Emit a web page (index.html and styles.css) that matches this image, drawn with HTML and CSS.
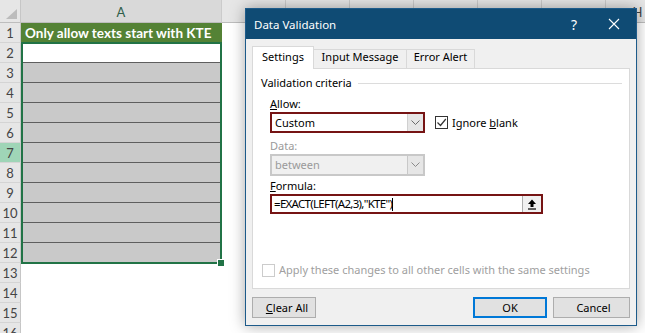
FILE: index.html
```html
<!DOCTYPE html>
<html lang="en">

<head>
  <meta charset="UTF-8">
  <title>Data Validation</title>
  <link rel="stylesheet" href="styles.css">
</head>

<body>
  <div class="sheet">
    <div class="row head-row">
      <div class="corner"><span class="corner-tri"></span></div>
      <div class="col-head col-a">A</div>
      <div class="col-head"></div>
      <div class="col-head"></div>
      <div class="col-head"></div>
      <div class="col-head"></div>
      <div class="col-head"></div>
      <div class="col-head"></div>
      <div class="col-head">H</div>
    </div>
    <div class="row">
      <div class="row-head">1</div>
      <div class="cell title-cell">Only allow texts start with KTE</div>
    </div>
    <div class="row"><div class="row-head">2</div><div class="cell marked"></div></div>
    <div class="row"><div class="row-head">3</div><div class="cell marked shaded"></div></div>
    <div class="row"><div class="row-head">4</div><div class="cell marked shaded"></div></div>
    <div class="row"><div class="row-head">5</div><div class="cell marked shaded"></div></div>
    <div class="row"><div class="row-head">6</div><div class="cell marked shaded"></div></div>
    <div class="row"><div class="row-head hover">7</div><div class="cell marked shaded"></div></div>
    <div class="row"><div class="row-head">8</div><div class="cell marked shaded"></div></div>
    <div class="row"><div class="row-head">9</div><div class="cell marked shaded"></div></div>
    <div class="row"><div class="row-head">10</div><div class="cell marked shaded"></div></div>
    <div class="row"><div class="row-head">11</div><div class="cell marked shaded"></div></div>
    <div class="row"><div class="row-head">12</div><div class="cell marked shaded"></div></div>
    <div class="row"><div class="row-head">13</div><div class="cell"></div></div>
    <div class="row"><div class="row-head">14</div><div class="cell"></div></div>
    <div class="row"><div class="row-head">15</div><div class="cell"></div></div>
    <div class="row"><div class="row-head">16</div><div class="cell"></div></div>

    <div class="selection"><span class="fill-handle"></span></div>
  </div>

  <div class="dialog">
    <div class="titlebar">
      <span class="title">Data Validation</span>
      <span class="help">?</span>
      <svg class="close" width="12" height="12" viewBox="0 0 12 12">
        <path d="M1 1 L11 11 M11 1 L1 11" stroke="#fff" stroke-width="1.1" fill="none" />
      </svg>
    </div>

    <div class="dialog-body">
      <div class="tabs">
        <div class="tab active">Settings</div>
        <div class="tab tab-input">Input Message</div>
        <div class="tab tab-error">Error Alert</div>
      </div>

      <div class="panel">
        <div class="group-head">
          <span>Validation criteria</span>
          <span class="rule"></span>
        </div>

        <div class="fields">
          <div class="field-label"><u>A</u>llow:</div>
          <div class="field-line">
            <div class="combo highlight">
              <span class="combo-text">Custom</span>
              <span class="combo-btn">
                <svg width="9" height="6" viewBox="0 0 9 6"><path d="M0.5 0.5 L4.5 4.5 L8.5 0.5" stroke="#6a6a6a" fill="none" /></svg>
              </span>
            </div>
            <div class="check">
              <span class="box">
                <svg width="11" height="11" viewBox="0 0 11 11"><path d="M1.5 5.5 L4.5 8.5 L9.8 2" stroke="#333" stroke-width="1.2" fill="none" /></svg>
              </span>
              <span>Ignore <u>b</u>lank</span>
            </div>
          </div>

          <div class="field-label disabled">Data:</div>
          <div class="combo disabled">
            <span class="combo-text">between</span>
            <span class="combo-btn">
              <svg width="9" height="6" viewBox="0 0 9 6"><path d="M0.5 0.5 L4.5 4.5 L8.5 0.5" stroke="#8a8a8a" fill="none" /></svg>
            </span>
          </div>

          <div class="field-label formula-label"><u>F</u>ormula:</div>
          <div class="formula highlight">
            <span class="formula-text">=EXACT(LEFT(A2,3),"KTE")</span>
            <span class="caret"></span>
            <span class="ref-btn">
              <svg width="10" height="11" viewBox="0 0 10 11">
                <path d="M5 0.5 L9 5 H6.5 V8 H3.5 V5 H1 Z" fill="#000" />
                <path d="M1 10 H9" stroke="#000" stroke-width="1.2" />
              </svg>
            </span>
          </div>
        </div>

        <div class="apply">
          <span class="box off"></span>
          <span>Apply these changes to all other cells with the same settings</span>
        </div>
      </div>

      <div class="buttons">
        <div class="btn btn-clear"><u>C</u>lear All</div>
        <div class="btn btn-ok">OK</div>
        <div class="btn btn-cancel">Cancel</div>
      </div>
    </div>
  </div>
</body>

</html>
```

FILE: styles.css
```css
body {
  margin: 0;
  width: 645px;
  height: 333px;
  overflow: hidden;
  position: relative;
  background-color: #ffffff;
  font-family: "Noto Sans", "Open Sans", sans-serif;
  font-size: 11px;
  color: #000000;
}

/* worksheet */

.sheet {
  position: relative;
  width: 670px;
  font-family: Lato, "Noto Sans", sans-serif;
}

.row {
  display: flex;
  height: 20px;
}

.head-row {
  height: 23px;
}

.corner {
  width: 21px;
  box-sizing: border-box;
  background-color: #e6e6e6;
  border-right: 1px solid #c6c6c6;
  border-bottom: 1px solid #bdbdbd;
  display: flex;
  align-items: flex-end;
  justify-content: flex-end;
  padding: 0 3px 3px 0;
}

.corner-tri {
  width: 0;
  height: 0;
  border-left: 11px solid transparent;
  border-bottom: 10px solid #bcbcbc;
}

.col-head {
  width: 64px;
  flex-shrink: 0;
  box-sizing: border-box;
  background-color: #e6e6e6;
  border-right: 1px solid #cbcbcb;
  border-bottom: 1px solid #bdbdbd;
  text-align: center;
  line-height: 24px;
  font-size: 13px;
  color: #444;
}

.col-head.col-a {
  width: 201px;
  background-color: #d9d9d9;
  color: #2f5f4a;
}

.row-head {
  width: 21px;
  flex-shrink: 0;
  box-sizing: border-box;
  background-color: #e6e6e6;
  border-right: 1px solid #c6c6c6;
  border-bottom: 1px solid #d4d4d4;
  text-align: center;
  line-height: 20px;
  font-size: 13px;
  color: #444;
}

.row-head.hover {
  background-color: #9fd5b7;
}

.cell {
  width: 201px;
  flex-shrink: 0;
  box-sizing: border-box;
  background-color: #fff;
}

.title-cell {
  background-color: #548235;
  color: #fff;
  font-weight: bold;
  font-size: 13.5px;
  line-height: 20px;
  padding-left: 4px;
  white-space: nowrap;
}

.cell.marked {
  border-bottom: 1px solid #5e5e5e;
}

.cell.shaded {
  background-color: #c9c9c9;
}

.selection {
  position: absolute;
  left: 21px;
  top: 42px;
  width: 201px;
  height: 222px;
  box-sizing: border-box;
  border: 2px solid #217346;
}

.fill-handle {
  position: absolute;
  right: -5px;
  bottom: -5px;
  width: 6px;
  height: 6px;
  background-color: #217346;
  border: 1px solid #fff;
}

/* dialog */

.dialog {
  position: absolute;
  left: 245px;
  top: 8px;
  width: 392px;
  height: 318px;
  box-sizing: border-box;
  border: 1px solid #1d5b8a;
  background-color: #f0f0f0;
  box-shadow: 0 0 14px rgba(0, 0, 0, 0.35);
  display: flex;
  flex-direction: column;
}

.titlebar {
  height: 30px;
  flex-shrink: 0;
  background-color: #0f4b74;
  color: #fff;
  display: flex;
  align-items: center;
  padding-left: 8px;
}

.title {
  flex: 1;
  font-size: 11.5px;
}

.help {
  font-size: 14px;
  margin-right: 31px;
}

.close {
  margin-right: 16px;
}

.dialog-body {
  flex: 1;
  padding: 7px 6px 7px 6px;
  display: flex;
  flex-direction: column;
}

.tabs {
  display: flex;
  align-items: flex-end;
  height: 22px;
}

.tab {
  box-sizing: border-box;
  height: 19px;
  border: 1px solid #d9d9d9;
  border-left: none;
  border-bottom: none;
  display: flex;
  align-items: flex-end;
  justify-content: center;
  padding-bottom: 3px;
  line-height: 16px;
}

.tab.active {
  position: relative;
  z-index: 1;
  width: 62px;
  height: 23px;
  margin-bottom: -1px;
  padding-bottom: 4px;
  background-color: #fff;
  border-left: 1px solid #d9d9d9;
}

.tab-input {
  width: 93px;
}

.tab-error {
  width: 68px;
}

.panel {
  height: 221px;
  box-sizing: border-box;
  background-color: #fff;
  border: 1px solid #d9d9d9;
  display: flex;
  flex-direction: column;
  padding: 6px 7px 0 8px;
}

.group-head {
  display: flex;
  align-items: center;
  gap: 6px;
  line-height: 16px;
}

.rule {
  flex: 1;
  height: 1px;
  background-color: #dcdcdc;
}

.fields {
  padding-left: 9px;
}

.field-label {
  line-height: 16px;
  margin-top: 5px;
}

.field-label.disabled {
  color: #9a9a9a;
}

.formula-label {
  margin-top: 2px;
}

.field-line {
  display: flex;
  align-items: center;
}

.combo {
  width: 155px;
  height: 21px;
  box-sizing: border-box;
  display: flex;
  align-items: stretch;
  background-color: #fff;
}

.combo.highlight,
.formula.highlight {
  border: 2px solid #761414;
}

.combo.disabled {
  height: 22px;
  border: 2px solid #c8c8c8;
  background-color: #f0f0f0;
  color: #9a9a9a;
}

.combo-text {
  flex: 1;
  padding-left: 3px;
  line-height: 17px;
}

.combo-btn {
  width: 15px;
  background-color: #e6e6e6;
  border-left: 1px solid #d0d0d0;
  display: flex;
  align-items: center;
  justify-content: center;
}

.combo.disabled .combo-btn {
  border-left-color: #c8c8c8;
}

.check {
  display: flex;
  align-items: center;
  margin-left: 10px;
}

.box {
  width: 13px;
  height: 13px;
  box-sizing: border-box;
  border: 1px solid #333;
  background-color: #fff;
  display: flex;
  align-items: center;
  justify-content: center;
  margin-right: 4px;
}

.box.off {
  border-color: #cccccc;
}

.formula {
  width: 273px;
  height: 20px;
  box-sizing: border-box;
  display: flex;
  align-items: center;
}

.formula-text {
  padding-left: 2px;
  font-size: 11.5px;
  letter-spacing: -0.7px;
  line-height: 16px;
}

.caret {
  width: 1px;
  height: 13px;
  background-color: #000;
  margin-left: 0;
}

.ref-btn {
  margin-left: auto;
  align-self: stretch;
  width: 19px;
  box-sizing: border-box;
  background-color: #f0f0f0;
  border-left: 1px solid #adadad;
  display: flex;
  align-items: center;
  justify-content: center;
}

.apply {
  margin-top: auto;
  margin-bottom: 10px;
  display: flex;
  align-items: center;
  line-height: 16px;
  color: #a0a0a0;
}

.apply .box {
  margin-left: 1px;
}

.buttons {
  display: flex;
  gap: 6px;
  margin-top: 8px;
}

.btn {
  height: 21px;
  box-sizing: border-box;
  background-color: #e1e1e1;
  border: 1px solid #adadad;
  display: flex;
  align-items: center;
  justify-content: center;
}

.btn-clear {
  width: 64px;
  margin-right: auto;
  padding-left: 6px;
}

.btn-ok {
  width: 74px;
  border: 2px solid #0078d7;
}

.btn-cancel {
  width: 77px;
  padding-left: 4px;
}
```
